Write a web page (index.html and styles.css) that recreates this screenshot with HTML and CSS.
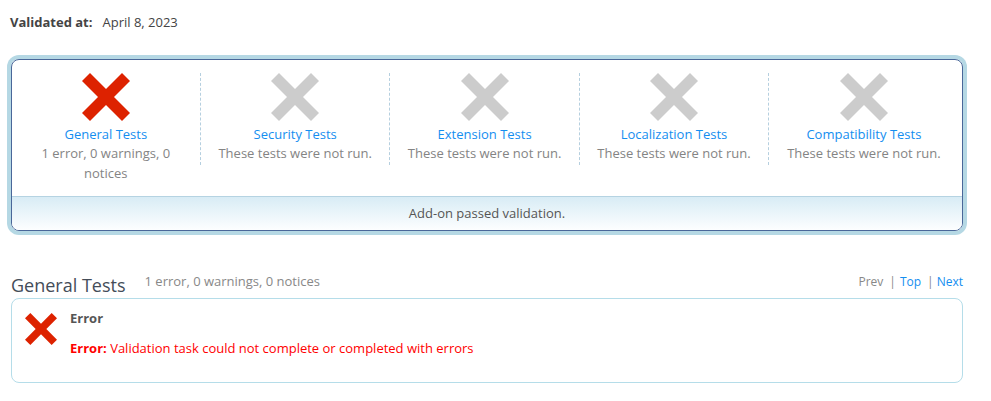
FILE: index.html
```html
<!DOCTYPE html>
<html lang="en">
<head>
<meta charset="utf-8">
<title>Validation results</title>
<link rel="stylesheet" href="styles.css">
</head>
<body>
<p class="validated"><strong>Validated at:</strong><span>April 8, 2023</span></p>
<section class="summary">
  <div class="tests">
    <div class="test">
      <svg class="x-icon red" viewBox="0 0 48 48"><path d="M8 0 24 16 40 0 48 8 32 24 48 40 40 48 24 32 8 48 0 40 16 24 0 8Z"/></svg>
      <a href="#">General Tests</a>
      <p>1 error, 0 warnings, 0 notices</p>
    </div>
    <div class="test">
      <svg class="x-icon grey" viewBox="0 0 48 48"><path d="M8 0 24 16 40 0 48 8 32 24 48 40 40 48 24 32 8 48 0 40 16 24 0 8Z"/></svg>
      <a href="#">Security Tests</a>
      <p>These tests were not run.</p>
    </div>
    <div class="test">
      <svg class="x-icon grey" viewBox="0 0 48 48"><path d="M8 0 24 16 40 0 48 8 32 24 48 40 40 48 24 32 8 48 0 40 16 24 0 8Z"/></svg>
      <a href="#">Extension Tests</a>
      <p>These tests were not run.</p>
    </div>
    <div class="test">
      <svg class="x-icon grey" viewBox="0 0 48 48"><path d="M8 0 24 16 40 0 48 8 32 24 48 40 40 48 24 32 8 48 0 40 16 24 0 8Z"/></svg>
      <a href="#">Localization Tests</a>
      <p>These tests were not run.</p>
    </div>
    <div class="test">
      <svg class="x-icon grey" viewBox="0 0 48 48"><path d="M8 0 24 16 40 0 48 8 32 24 48 40 40 48 24 32 8 48 0 40 16 24 0 8Z"/></svg>
      <a href="#">Compatibility Tests</a>
      <p>These tests were not run.</p>
    </div>
  </div>
  <div class="status">Add-on passed validation.</div>
</section>
<div class="result-head">
  <h2>General Tests</h2>
  <span class="counts">1 error, 0 warnings, 0 notices</span>
  <nav class="pager"><span>Prev</span><i>|</i><a href="#">Top</a><i>|</i><a class="last" href="#">Next</a></nav>
</div>
<section class="message">
  <svg class="msg-icon red" viewBox="0 0 48 48"><path d="M8 0 24 16 40 0 48 8 32 24 48 40 40 48 24 32 8 48 0 40 16 24 0 8Z"/></svg>
  <div>
    <h3>Error</h3>
    <p class="err"><strong>Error:</strong> Validation task could not complete or completed with errors</p>
  </div>
</section>
</body>
</html>
```
FILE: styles.css
```css
* { box-sizing: border-box; }
html, body { margin: 0; padding: 0; }
body {
  width: 991px;
  height: 401px;
  overflow: hidden;
  padding: 13px 28px 0 11px;
  font-family: "Open Sans", sans-serif;
  font-size: 13px;
  color: #555;
  background: #fff;
}
.validated {
  margin: 0 0 0 -1px;
  height: 46px;
  font-size: 13px;
  line-height: 18px;
  color: #444;
}
.validated strong { margin-right: 10px; }
.summary {
  width: 952px;
  height: 172px;
  border: 1px solid #4a6799;
  border-radius: 8px;
  box-shadow: 0 0 0 4px #b5d8e4;
  overflow: hidden;
  display: flex;
  flex-direction: column;
}
.tests {
  flex: 1;
  width: 947px;
  margin-left: -1.4px;
  display: grid;
  grid-template-columns: repeat(5, 1fr);
  padding-top: 13px;
}
.test {
  height: 92px;
  padding: 0 10px;
  text-align: center;
  border-left: 1px dashed #b5cfdf;
}
.test:first-child { border-left: 0; padding: 0 16px 0 17px; }
.test:last-child { padding-left: 11px; }
.x-icon { display: block; width: 48px; height: 48px; margin: 0 auto 4px; }
.red path { fill: #dd2200; }
.grey path { fill: #cccccc; }
.test a {
  display: block;
  color: #148ef0;
  text-decoration: none;
  line-height: 18px;
  font-size: 13px;
}
.test p {
  margin: 0;
  color: #848484;
  line-height: 20px;
  font-size: 13px;
}
.status {
  height: 34px;
  line-height: 33px;
  text-align: center;
  border-top: 1px solid #b5d3e2;
  background: linear-gradient(#d8ecf5, #fdfeff);
  color: #555;
}
.result-head {
  display: flex;
  align-items: baseline;
  margin-top: 38px;
  height: 29px;
  width: 952px;
}
.result-head h2 {
  margin: 0;
  font-size: 18px;
  font-weight: 400;
  color: #444c58;
  line-height: 32px;
}
.counts { margin-left: 19px; color: #888; position: relative; top: -6px; }
.pager {
  margin-left: auto;
  font-size: 12px;
  color: #888;
  position: relative;
  top: -6px;
}
.pager a { color: #148ef0; text-decoration: none; }
.pager i { font-style: normal; margin: 0 4px 0 6px; }
.pager .last { margin-left: -1px; }
.message {
  width: 952px;
  height: 85px;
  border: 1px solid #b5dde9;
  border-radius: 8px;
  display: flex;
  padding: 14px 13px;
}
.msg-icon { width: 32px; height: 32px; flex: none; margin-right: 13px; }
.message h3 {
  margin: -4px 0 0;
  font-size: 13px;
  font-weight: 700;
  line-height: 18px;
  color: #555;
}
.err {
  margin: 12px 0 0;
  font-size: 13px;
  line-height: 18px;
  color: #f00;
}
```
